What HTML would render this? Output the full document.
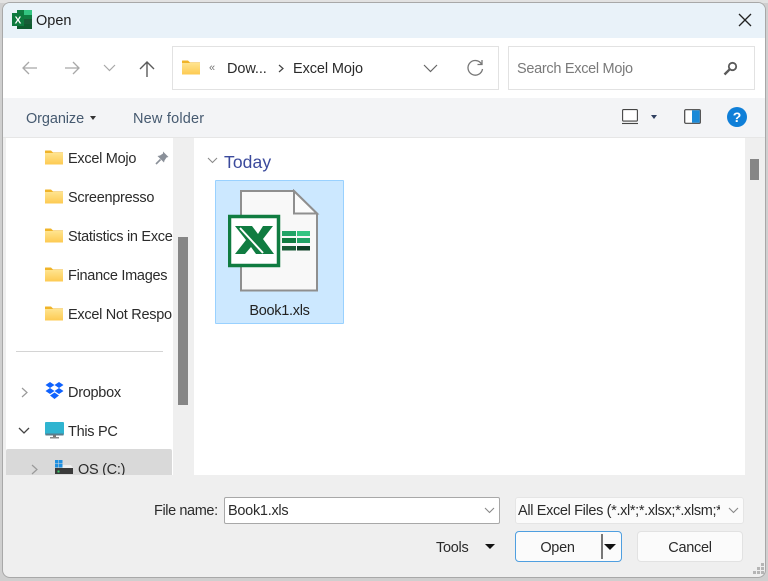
<!DOCTYPE html>
<html><head><meta charset="utf-8"><style>
html,body{margin:0;padding:0;width:768px;height:581px;overflow:hidden;background:#cfcfcf}
body{position:relative;font-family:"Liberation Sans",sans-serif;color:#2b2b2b}
div,span,svg{position:absolute;box-sizing:border-box}
.t{white-space:nowrap;font-size:14.5px;line-height:20px;height:20px;letter-spacing:-.28px}
</style></head><body>
<div style="left:0;top:0;width:768px;height:3px;background:#e2e2e2"></div>
<div style="left:2px;top:2px;width:764px;height:576px;background:#efefef;border:1px solid #a8a8a8;border-radius:8px;overflow:hidden"></div>
<div style="left:3px;top:3px;width:762px;height:35px;background:#e9f2f9;border-radius:7px 7px 0 0"></div>
<div style="left:3px;top:38px;width:762px;height:60px;background:#fff"></div>
<div style="left:3px;top:98px;width:762px;height:39px;background:#f3f4f6"></div>
<div style="left:3px;top:137px;width:762px;height:1px;background:#e6e6e6"></div>
<!-- title -->
<svg style="left:12px;top:10px" width="20" height="19" viewBox="0 0 20 19"><rect x="5" width="15" height="19" fill="#107c41"/><rect x="12" width="8" height="5" fill="#33c481"/><rect x="12" y="9" width="8" height="5" fill="#185c37"/><rect x="5" y="14" width="15" height="5" fill="#0e5c2f"/><rect y="3" width="12" height="13" fill="#0d7a3e"/><text x="6" y="13.5" font-family="Liberation Sans" font-size="10" font-weight="bold" fill="#fff" text-anchor="middle">X</text></svg>
<div class="t" style="left:36px;top:11px;color:#1f1f1f;letter-spacing:0">Open</div>
<svg style="left:738px;top:13px" width="14" height="14" viewBox="0 0 14 14"><path d="M1 1L13 13M13 1L1 13" stroke="#222" stroke-width="1.3" fill="none"/></svg>
<!-- nav arrows -->
<svg style="left:21px;top:60px" width="17" height="16" viewBox="0 0 17 16"><path d="M16 8H2M8 2L2 8L8 14" stroke="#a8a8a8" stroke-width="1.3" fill="none"/></svg>
<svg style="left:64px;top:60px" width="17" height="16" viewBox="0 0 17 16"><path d="M1 8H15M9 2L15 8L9 14" stroke="#a8a8a8" stroke-width="1.3" fill="none"/></svg>
<svg style="left:103px;top:64px" width="13" height="8" viewBox="0 0 13 8"><path d="M1 1L6.500 6.500L12 1" stroke="#a8a8a8" stroke-width="1.2" fill="none"/></svg>
<svg style="left:138px;top:60px" width="18" height="18" viewBox="0 0 18 18"><path d="M9 17V2M2 9L9 2L16 9" stroke="#5a5a5a" stroke-width="1.4" fill="none"/></svg>
<!-- address -->
<div style="left:172px;top:46px;width:327px;height:44px;background:#fff;border:1px solid #e2e2e2"></div>
<svg width="0" height="0" style="left:0;top:0"><defs><linearGradient id="g" x1="0" y1="0" x2="0" y2="1"><stop offset="0" stop-color="#ffe48f"/><stop offset="1" stop-color="#fdca52"/></linearGradient><g id="f"><path d="M0 1Q0 .5 .5 .5H6L8 2.500H18V14.500H0Z" fill="#f0b429"/><rect y="3" width="18" height="11.500" fill="url(#g)"/></g></defs></svg>
<svg style="left:182px;top:60px" width="19" height="15"><use href="#f"/></svg>
<div class="t" style="left:209px;top:58px;font-size:11px;color:#777">«</div>
<div class="t" style="left:227px;top:59px;letter-spacing:-.1px">Dow...</div>
<svg style="left:278px;top:64px" width="6" height="9" viewBox="0 0 6 9"><path d="M1 1L5 4.500L1 8" stroke="#444" stroke-width="1.2" fill="none"/></svg>
<div class="t" style="left:293px;top:59px;letter-spacing:-.1px">Excel Mojo</div>
<svg style="left:423px;top:64px" width="15" height="9" viewBox="0 0 15 9"><path d="M1 1L7.500 7.500L14 1" stroke="#666" stroke-width="1.2" fill="none"/></svg>
<svg style="left:466px;top:59px" width="18" height="19" viewBox="0 0 18 19"><path d="M15.500 5A7.300 7.300 0 1 0 16.500 10M16 1V5.500H11.500" stroke="#777" stroke-width="1.3" fill="none"/></svg>
<!-- search -->
<div style="left:508px;top:46px;width:247px;height:44px;background:#fff;border:1px solid #e2e2e2"></div>
<div class="t" style="left:517px;top:59px;color:#7a7a7a;letter-spacing:-.3px">Search Excel Mojo</div>
<svg style="left:723px;top:61px" width="15" height="15" viewBox="0 0 15 15"><circle cx="9.500" cy="5.500" r="3.700" fill="none" stroke="#5a5a5a" stroke-width="1.800"/><path d="M6.800 8.200L1.500 13.500" stroke="#5a5a5a" stroke-width="2.400"/></svg>
<!-- command bar -->
<div class="t" style="left:26px;top:109px;color:#465a70;letter-spacing:-.1px">Organize</div>
<div style="left:90px;top:116px;width:0;height:0;border:3.500px solid transparent;border-top:4px solid #333;border-bottom:0"></div>
<div class="t" style="left:133px;top:109px;color:#465a70;letter-spacing:.2px">New folder</div>
<svg style="left:622px;top:109px" width="16" height="16" viewBox="0 0 16 16"><rect x=".6" y=".6" width="14.800" height="11.500" rx="1" fill="#fff" stroke="#444" stroke-width="1.100"/><path d="M0 14.500H16" stroke="#444" stroke-width="1.100"/></svg>
<div style="left:651px;top:115px;width:0;height:0;border:3px solid transparent;border-top:4px solid #2f3f5f;border-bottom:0"></div>
<svg style="left:684px;top:109px" width="17" height="15" viewBox="0 0 17 15"><rect x=".7" y=".7" width="15.600" height="13.600" rx="1" fill="#fff" stroke="#444" stroke-width="1.200"/><rect x="8" y="1.300" width="7.700" height="12.400" fill="#1b8ad8"/></svg>
<div style="left:727px;top:107px;width:20px;height:20px;border-radius:50%;background:#0f7fd8;color:#fff;font-size:14px;font-weight:bold;line-height:20px;text-align:center">?</div>
<!-- nav pane -->
<div style="left:6px;top:138px;width:167px;height:337px;background:#fff;overflow:hidden">
<div style="left:0;top:311px;width:166px;height:30px;background:#d9d9d9;border-radius:2px 2px 0 0"></div>
</div>
<div style="left:3px;top:138px;width:3px;height:337px;background:#efefef"></div>
<div style="left:173px;top:138px;width:21px;height:337px;background:#efefef"></div>
<div style="left:178px;top:237px;width:10px;height:168px;background:#868686"></div>
<!-- folders -->
<svg style="left:45px;top:150px" width="19" height="15"><use href="#f"/></svg>
<div class="t" style="left:68px;top:149px">Excel Mojo</div>
<svg style="left:155px;top:151px" width="14" height="14" viewBox="0 0 14 14"><path d="M8 .5L13.500 6L11.500 6.500L9.500 9.500L9 11.500L2.500 5L5 4.500L8 2.500Z" fill="#8a9099"/><path d="M5.500 8.500L1 13" stroke="#8a9099" stroke-width="1.600"/></svg>
<svg style="left:45px;top:189px" width="19" height="15"><use href="#f"/></svg>
<div class="t" style="left:68px;top:188px">Screenpresso</div>
<svg style="left:45px;top:228px" width="19" height="15"><use href="#f"/></svg>
<div style="left:68px;top:227px;width:105px;height:20px;overflow:hidden"><div class="t" style="left:0;top:0">Statistics in Excel</div></div>
<svg style="left:45px;top:267px" width="19" height="15"><use href="#f"/></svg>
<div class="t" style="left:68px;top:266px">Finance Images</div>
<svg style="left:45px;top:306px" width="19" height="15"><use href="#f"/></svg>
<div style="left:68px;top:305px;width:104px;height:20px;overflow:hidden"><div class="t" style="left:0;top:0">Excel Not Responding</div></div>
<div style="left:16px;top:351px;width:147px;height:1px;background:#d4d4d4"></div>
<svg style="left:21px;top:387px" width="7" height="11" viewBox="0 0 7 11"><path d="M1 1L6 5.500L1 10" stroke="#999" stroke-width="1.200" fill="none"/></svg>
<svg style="left:45px;top:382px" width="19" height="18" viewBox="0 0 19 18" fill="#0f62fe"><path d="M5 0L9.500 3L5 6L.5 3ZM14 0L18.500 3L14 6L9.500 3ZM5 6L9.500 9L5 12L.5 9ZM14 6L18.500 9L14 12L9.500 9ZM9.500 10.500L14 13.500L9.500 17L5 13.500Z"/></svg>
<div class="t" style="left:68px;top:383px">Dropbox</div>
<svg style="left:18px;top:427px" width="12" height="7" viewBox="0 0 12 7"><path d="M1 1L6 6L11 1" stroke="#444" stroke-width="1.300" fill="none"/></svg>
<svg style="left:45px;top:422px" width="19" height="17" viewBox="0 0 19 17"><rect width="19" height="13" rx="1" fill="#2fb4d0"/><rect x=".5" y="11.500" width="18" height="2" fill="#5a7d8c"/><rect x="8" y="13" width="3" height="2" fill="#777"/><rect x="5" y="15" width="9" height="1.500" fill="#888"/></svg>
<div class="t" style="left:68px;top:422px">This PC</div>
<svg style="left:31px;top:464px" width="7" height="11" viewBox="0 0 7 11"><path d="M1 1L6 5.500L1 10" stroke="#999" stroke-width="1.200" fill="none"/></svg>
<svg style="left:55px;top:460px" width="18" height="15" viewBox="0 0 18 15"><rect width="3.500" height="3.500" fill="#1f8fe0"/><rect x="4" width="3.500" height="3.500" fill="#1f8fe0"/><rect y="4" width="3.500" height="3.500" fill="#1f8fe0"/><rect x="4" y="4" width="3.500" height="3.500" fill="#1f8fe0"/><path d="M0 8H18V14H0Z" fill="#3a3a3a"/><path d="M7.500 5H16L18 8H7.500Z" fill="#eee"/><rect x="2.500" y="10.500" width="2" height="2" fill="#3bd16f"/></svg>
<div style="left:78px;top:460px;width:70px;height:15px;overflow:hidden"><div class="t" style="left:0;top:0">OS (C:)</div></div>
<!-- content -->
<div style="left:194px;top:138px;width:551px;height:337px;background:#fff"></div>
<div style="left:745px;top:138px;width:20px;height:337px;background:#efefef"></div>
<div style="left:750px;top:159px;width:9px;height:21px;background:#868686"></div>
<svg style="left:207px;top:157px" width="11" height="7" viewBox="0 0 11 7"><path d="M1 1L5.500 5.500L10 1" stroke="#8a8a8a" stroke-width="1.100" fill="none"/></svg>
<div class="t" style="left:224px;top:151px;font-size:17.500px;height:22px;line-height:22px;color:#3b4a9c;letter-spacing:.1px">Today</div>
<div style="left:215px;top:180px;width:129px;height:144px;background:#cce8ff;border:1px solid #99d1ff;border-radius:1px"></div>
<svg style="left:228px;top:189px" width="92" height="104" viewBox="0 0 92 104">
<path d="M13 2H66L89 24.500V101.500H13Z" fill="#f8f8f8" stroke="#8f8f8f" stroke-width="2"/>
<path d="M66 2V24.500H89Z" fill="#fbfbfb" stroke="#8f8f8f" stroke-width="2"/>
<rect x="54" y="42" width="14" height="5" fill="#21a366"/><rect x="69" y="42" width="13" height="5" fill="#33c481"/>
<rect x="54" y="49" width="14" height="5" fill="#107c41"/><rect x="69" y="49" width="13" height="5" fill="#21a366"/>
<rect x="54" y="57" width="14" height="4.500" fill="#185c37"/><rect x="69" y="57" width="13" height="4.500" fill="#0e3f26"/>
<rect x="1.500" y="27.500" width="49" height="49" fill="#fff" stroke="#107c41" stroke-width="3.500"/>
<path d="M7 37H24L30 45L35 37H45L35 50L46 65H28L23 58L17 65H7L18 51Z" fill="#107c41"/>
<path d="M12 39L35 64" stroke="#fff" stroke-width="2"/>
</svg>
<div class="t" style="left:215px;top:301px;width:129px;text-align:center;color:#222">Book1.xls</div>
<!-- bottom -->
<div class="t" style="left:154px;top:501px;letter-spacing:-.4px">File name:</div>
<div style="left:224px;top:497px;width:276px;height:27px;background:#fff;border:1px solid #a8a8a8;border-radius:2px"></div>
<div class="t" style="left:228px;top:501px">Book1.xls</div>
<svg style="left:484px;top:507px" width="11" height="7" viewBox="0 0 11 7"><path d="M1 1L5.500 5.500L10 1" stroke="#888" stroke-width="1.100" fill="none"/></svg>
<div style="left:515px;top:497px;width:229px;height:27px;background:#fbfbfb;border:1px solid #e5e5e5;border-radius:3px"></div>
<div style="left:518px;top:501px;width:202px;height:20px;overflow:hidden"><div class="t" style="left:0;top:0;letter-spacing:-.35px">All Excel Files (*.xl*;*.xlsx;*.xlsm;*.xlsb;*.xlam</div></div>
<svg style="left:728px;top:507px" width="11" height="7" viewBox="0 0 11 7"><path d="M1 1L5.500 5.500L10 1" stroke="#888" stroke-width="1.100" fill="none"/></svg>
<div class="t" style="left:436px;top:538px">Tools</div>
<div style="left:485px;top:544px;width:0;height:0;border:5px solid transparent;border-top:5px solid #111;border-bottom:0"></div>
<div style="left:515px;top:531px;width:107px;height:31px;background:#fbfbfb;border:1.500px solid #4f9fe0;border-radius:4px"></div>
<div class="t" style="left:515px;top:538px;width:85px;text-align:center">Open</div>
<div style="left:601px;top:534px;width:2px;height:25px;background:#777"></div>
<div style="left:604px;top:544px;width:0;height:0;border:6.500px solid transparent;border-top:6.500px solid #111;border-bottom:0"></div>
<div style="left:637px;top:531px;width:106px;height:31px;background:#fbfbfb;border:1px solid #e2e2e2;border-radius:4px"></div>
<div class="t" style="left:637px;top:538px;width:106px;text-align:center">Cancel</div>
<svg style="left:753px;top:563px" width="12" height="12" viewBox="0 0 12 12" fill="#b5b5b5"><rect x="8" width="3" height="3"/><rect x="4" y="4" width="3" height="3"/><rect x="8" y="4" width="3" height="3"/><rect y="8" width="3" height="3"/><rect x="4" y="8" width="3" height="3"/><rect x="8" y="8" width="3" height="3"/></svg>
</body></html>
